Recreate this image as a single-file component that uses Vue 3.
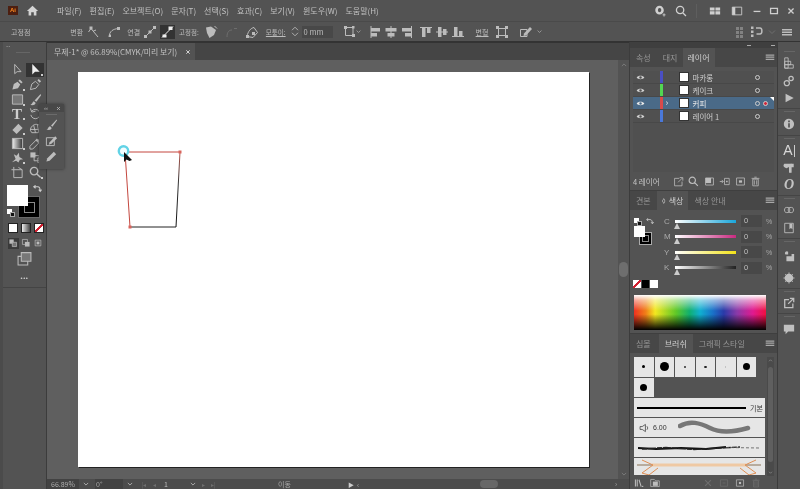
<template>
  <div class="app">
    <!-- 메뉴 바 -->
    <header class="menubar">
      <div class="logo">Ai</div>
      <Ic n="home" class="home" />
      <nav class="menus">
        <span v-for="m in menus" :key="m">{{ m }}</span>
      </nav>
      <div class="win">
        <Ic n="user" class="w-ic" />
        <Ic n="search" class="w-ic search" />
        <i class="win-sep"></i>
        <Ic n="layout" class="w-ic" />
        <Ic n="panel" class="w-ic panel-ic" />
        <Ic n="min" class="w-ic min" />
        <Ic n="max" class="w-ic" />
        <Ic n="close" class="w-ic last" />
      </div>
    </header>

    <!-- 옵션 바 -->
    <section class="optbar">
      <span class="lbl first">고정점</span>
      <span class="lbl conv">변환</span>
      <div class="grp g-conv"><Ic n="convA" class="o-ic" /><Ic n="convB" class="o-ic" /></div>
      <span class="lbl link">연결</span>
      <div class="grp g-link"><Ic n="joinA" class="o-ic" /><Ic n="joinB" class="o-ic on" /></div>
      <span class="lbl anch">고정점:</span>
      <div class="grp g-anch"><Ic n="anchA" class="o-ic" /><Ic n="anchB" class="o-ic off" /><Ic n="anchC" class="o-ic" /></div>
      <span class="lbl corner">모퉁이:</span>
      <div class="spin"><Ic n="spin" class="spin-ic" /></div>
      <div class="mm">0 mm</div>
      <Ic n="shapeBox" class="o-ic box" />
      <Ic n="chev" class="chev chev-box" />
      <div class="grp g-align">
        <Ic v-for="a in aligns" :key="a" :n="a" class="o-ic" />
      </div>
      <span class="lbl trans">변형</span>
      <Ic n="cornerBox" class="o-ic tbox" />
      <Ic n="pencilBox" class="o-ic pbox" />
      <Ic n="chev" class="chev chev-p" />
      <div class="grp g-right">
        <Ic n="dotsGrid" class="o-ic dim" />
        <Ic n="isolate" class="o-ic" />
        <Ic n="chev" class="o-ic off" />
        <Ic n="burger" class="o-ic" />
      </div>
    </section>

    <div class="main">
      <!-- 왼쪽 도구 패널 -->
      <aside class="tools">
        <div class="tools-head"><span>‥</span><i></i></div>
        <div class="tool-grid">
          <div v-for="t in tools" :key="t.n" class="tool" :class="{ active: t.active }">
            <span v-if="t.n === 'type'" class="type-t">T</span>
            <Ic v-else :n="t.n" class="t-ic" />
            <i v-if="t.more" class="more"></i>
          </div>
        </div>
        <div class="colors">
          <div class="stroke-sw"><i></i></div>
          <div class="fill-sw"></div>
          <Ic n="swap" class="swap" />
          <div class="defaults"><i class="d1"></i><i class="d2"></i></div>
        </div>
        <div class="modes">
          <span class="mode"><i class="m-white"></i></span>
          <span class="mode"><i class="m-grad"></i></span>
          <span class="mode"><i class="m-none"></i></span>
        </div>
        <div class="draws">
          <span class="draw on"><Ic n="drawA" class="t-ic small" /></span>
          <span class="draw"><Ic n="drawB" class="t-ic small" /></span>
          <span class="draw"><Ic n="drawC" class="t-ic small" /></span>
        </div>
        <Ic n="screen" class="screen" />
        <div class="dots">•••</div>
      </aside>

      <!-- 펜/연필 플라이아웃 -->
      <div class="flyout">
        <div class="fly-head"><span>‹‹</span><Ic n="close" class="fly-x" /></div>
        <i class="fly-grip"></i>
        <Ic n="brush" class="fly-ic" />
        <Ic n="blob" class="fly-ic" />
        <Ic n="pencil" class="fly-ic" />
      </div>

      <!-- 문서 영역 -->
      <section class="doc">
        <div class="tabs">
          <div class="tab">
            <span>무제-1* @ 66.89%(CMYK/미리 보기)</span>
            <Ic n="close" class="tab-x" />
          </div>
        </div>
        <div class="canvas-row">
          <div class="canvas">
            <div class="artboard">
              <svg class="shape" width="120" height="100" viewBox="0 0 120 100">
                <defs>
                  <linearGradient id="rightEdge" x1="0" y1="0" x2="0" y2="1">
                    <stop offset="0" stop-color="#b5564c" />
                    <stop offset="0.4" stop-color="#333" />
                    <stop offset="1" stop-color="#111" />
                  </linearGradient>
                </defs>
                <path d="M52 80H98" stroke="#222" fill="none" />
                <path d="M102 5L98 80" stroke="url(#rightEdge)" fill="none" />
                <path d="M47 5H102M47 5L52 80" stroke="#c4473f" fill="none" />
                <rect x="100.500" y="3.500" width="3" height="3" fill="#d9645c" />
                <rect x="50.500" y="78.500" width="3" height="3" fill="#d9645c" />
                <circle cx="45.500" cy="4" r="4.700" stroke="#62d3e6" stroke-width="2.400" fill="#f4fdff" />
                <path d="M46 5V15L48.500 12.500L51.500 14L54 13Z" fill="#111" />
              </svg>
            </div>
          </div>
          <div class="vscroll">
            <Ic n="chevUp" class="sc-ic" />
            <i class="vthumb"></i>
            <Ic n="chev" class="sc-ic" />
          </div>
        </div>
        <footer class="status">
          <span class="field zoom">66.89%</span>
          <Ic n="chev" class="st-ic" />
          <span class="field deg">0°</span>
          <Ic n="chev" class="st-ic" />
          <span class="nav first-nav">|◂</span><span class="nav">◂</span>
          <span class="page">1</span>
          <Ic n="chev" class="st-ic" />
          <span class="nav">▸</span><span class="nav">▸|</span>
          <span class="move">이동</span>
          <span class="play">▶</span>
          <div class="hscroll">
            <span class="sc-l">‹</span>
            <i class="hthumb"></i>
            <span class="sc-r">›</span>
          </div>
        </footer>
      </section>

      <!-- 오른쪽 패널 -->
      <aside class="panels">
        <div class="strip"><i></i><i></i></div>

        <section class="panel layers">
          <div class="ptabs">
            <span class="pt t1">속성</span>
            <span class="pt t2">대지</span>
            <span class="pt active t3">레이어</span>
            <Ic n="burger" class="pmenu" />
          </div>
          <div class="layer-list">
            <div v-for="l in layers" :key="l.name" class="layer" :class="{ sel: l.sel }">
              <Ic n="eye" class="eye" />
              <i class="lcolor" :style="{ background: l.color }"></i>
              <span class="larrow">{{ l.sel ? '›' : '' }}</span>
              <i class="thumb"></i>
              <span class="lname">{{ l.name }}</span>
              <i class="target"></i>
              <i v-if="l.sel" class="lsel"></i>
              <i v-if="l.sel" class="lcorner"></i>
            </div>
          </div>
          <div class="lfoot">
            <span>4 레이어</span>
            <div class="lfoot-ic">
              <Ic v-for="f in layerFoot" :key="f" :n="f" class="f-ic" />
            </div>
          </div>
        </section>

        <section class="panel colorp">
          <div class="ptabs">
            <span class="pt c1">견본</span>
            <span class="pt active c2"><em>◊</em> 색상</span>
            <span class="pt c3">색상 안내</span>
            <Ic n="burger" class="pmenu" />
          </div>
          <div class="cbody">
            <div class="cswatch">
              <div class="defaults dsm"><i class="d1"></i><i class="d2"></i></div>
              <Ic n="swap" class="swap2" />
              <div class="stroke2"><i></i></div>
              <div class="fill2"></div>
            </div>
            <div class="sliders">
              <div v-for="s in sliders" :key="s.k" class="slider">
                <label>{{ s.k }}</label>
                <div class="track" :style="{ background: s.bg }"><i class="knob"></i></div>
                <span class="val">0</span>
                <span class="pct">%</span>
              </div>
            </div>
          </div>
          <div class="quick">
            <i class="q-none"></i><i class="q-black"></i><i class="q-white"></i>
          </div>
          <div class="spectrum"></div>
        </section>

        <section class="panel brushes">
          <div class="ptabs">
            <span class="pt b1">심볼</span>
            <span class="pt active b2">브러쉬</span>
            <span class="pt b3">그래픽 스타일</span>
            <Ic n="burger" class="pmenu" />
          </div>
          <div class="bbody">
            <div class="blist">
              <div class="bgrid">
                <div v-for="(b, i) in dots" :key="i" class="bcell"><i :style="{ width: b.w + 'px', height: b.h + 'px', opacity: b.o }"></i></div>
              </div>
              <div class="brow basic"><i></i><span>기본</span></div>
              <div class="brow size">
                <Ic n="speaker" class="spk" />
                <span>6.00</span>
                <svg width="74" height="16" viewBox="0 0 74 16">
                  <path d="M2 6C12 0 22 3 32 8C42 13 56 12 70 8" stroke="#777" stroke-width="4.500" stroke-linecap="round" fill="none" />
                </svg>
              </div>
              <div class="brow ink">
                <svg width="126" height="14" viewBox="0 0 126 14">
                  <path d="M2 7L20 8L45 7L70 8L90 6" stroke="#111" stroke-width="2.200" fill="none" />
                  <path d="M6 8L30 6.500L58 8.500L84 7L104 6" stroke="#222" stroke-width="1.400" stroke-dasharray="5 1 8 1" fill="none" />
                  <path d="M90 6.500L124 7" stroke="#555" stroke-width="0.800" stroke-dasharray="3 2" fill="none" />
                </svg>
              </div>
              <div class="brow arrow">
                <svg width="130" height="18" viewBox="0 0 130 18">
                  <path d="M3 7H127" stroke="#8a7256" fill="none" />
                  <path d="M18 5.500H112V8.500H18Z" fill="#efc9a4" />
                  <path d="M8 2L19 7L8 15L15 17L24 10M122 2L111 7L122 15L115 17L106 10" stroke="#df8f55" fill="none" />
                </svg>
              </div>
            </div>
            <div class="bscroll">
              <Ic n="chevUp" class="sc-ic" />
              <i></i>
              <Ic n="chev" class="sc-ic" />
            </div>
          </div>
          <div class="bfoot">
            <Ic n="library" class="bf" />
            <Ic n="cloudLib" class="bf lib" />
            <div class="bfoot-r">
              <Ic n="xmark" class="bf off" />
              <Ic n="optBox" class="bf off" />
              <Ic n="newBox" class="bf" />
              <Ic n="trash" class="bf off" />
            </div>
          </div>
        </section>
      </aside>

      <!-- 오른쪽 도크 -->
      <aside class="dock">
        <div v-for="(g, i) in dock" :key="i" class="dock-group">
          <i class="dock-grip"></i>
          <template v-for="d in g" :key="d">
            <span v-if="d === 'A'" class="d-a">A<b></b></span>
            <span v-else-if="d === 'O'" class="d-o">O</span>
            <Ic v-else :n="d" class="d-ic" />
          </template>
        </div>
      </aside>
    </div>
  </div>
</template>

<script setup>
import { h } from 'vue'

// 아이콘: [path, 's'(선) | 'f'(면) | 'b'(둘 다)]
const icons = {
  home: [['M1 7.500L7 2L13 7.500H11.200V12.500H8.400V9H5.600V12.500H2.800V7.500Z', 'f']],
  user: [['M6.500 1A5 5 0 1 1 6.400 11A5 5 0 0 1 6.500 1ZM6.500 3.500A2 2.500 0 1 0 6.600 8.500A2 2.500 0 0 0 6.500 3.500Z', 'f'], ['M10 11.500H13.500M11.700 9.700V13.500', 's']],
  search: [['M6 1.500A4.300 4.300 0 1 1 5.900 10.100A4.300 4.300 0 0 1 6 1.500ZM9 9L12.800 12.800', 's2']],
  layout: [['M1 3H6.500V6.300H1ZM7.500 3H13V6.300H7.500ZM1 7.300H6.500V11H1ZM7.500 7.300H13V11H7.500Z', 'f']],
  panel: [['M1.500 2.500H12.500V11.500H1.500Z', 's'], ['M1.500 2.500H5V11.500H1.500Z', 'f']],
  min: [['M3 7.500H11', 's2']],
  max: [['M3 4H11V10H3Z', 's2']],
  close: [['M4 4L10 10M10 4L4 10', 's2']],
  convA: [['M4 3.500L11 12M4 3.500L1.500 7M6.200 6.200L9 5', 's'], ['M2.500 1.500H5.500V4.500H2.500Z', 'f']],
  convB: [['M2 12C2.500 6 6 4 11.500 3.500', 's'], ['M10 2H13V5H10Z', 'f'], ['M2 9.500H4V12H2Z', 'f']],
  joinA: [['M2 12L12 2', 's'], ['M1 10H4V13H1ZM5.500 5.500H8.500V8.500H5.500ZM10 1H13V4H10Z', 'f']],
  joinB: [['M1.500 12.500L12.500 1.500', 's'], ['M2 9.500H6V12.500H2ZM8 1.500H12V5H8Z', 'f']],
  anchA: [['M2 2.500L7 1.500L12 5L10 10L5.500 13L3 8Z', 'f'], ['M10.500 1L13 3.500', 's']],
  anchB: [['M3 12C3 7 5 5 8 5M10 3.500H13', 's']],
  anchC: [['M2 11.500C3 6 6 3 9 2.500L12.500 7.500L8 12.500Z', 's'], ['M1 10H4V13H1ZM7 7H10V10H7Z', 'f']],
  spin: [['M3.500 5.500L7 2L10.500 5.500M3.500 8.500L7 12L10.500 8.500', 's']],
  shapeBox: [['M2.500 2.500H10V10.500H2.500Z', 's'], ['M1 1H4V4H1ZM9 9H12V12H9ZM9 1H11.500V3.500H9Z', 'f']],
  chev: [['M4 5.500L7 8.500L10 5.500', 's']],
  chevUp: [['M4 8.500L7 5.500L10 8.500', 's']],
  alL: [['M3 1V13', 's'], ['M3 3H12V6.500H3ZM3 8H9V11.500H3Z', 'f']],
  alC: [['M7 1V13', 's'], ['M1.500 3H12.500V6.500H1.500ZM3.500 8H10.500V11.500H3.500Z', 'f']],
  alR: [['M11.500 1V13', 's'], ['M2 3H11.500V6.500H2ZM5 8H11.500V11.500H5Z', 'f']],
  alT: [['M1 2.500H13', 's'], ['M3 2.500H6.500V12H3ZM8 2.500H11.500V8H8Z', 'f']],
  alM: [['M1 7H13', 's'], ['M3 2H6.500V12H3ZM8 4H11.500V10H8Z', 'f']],
  alB: [['M1 11.500H13', 's'], ['M3 2H6.500V11.500H3ZM8 6H11.500V11.500H8Z', 'f']],
  cornerBox: [['M3.500 3.500H10.500V10.500H3.500Z', 's'], ['M1 1H4V4H1ZM10 1H13V4H10ZM1 10H4V13H1ZM10 10H13V13H10Z', 'f']],
  pencilBox: [['M1.500 4.500H8V11.500H1.500Z', 's'], ['M5 8.500L11 2L13 4L7 10.500L4.500 11Z', 'f']],
  dotsGrid: [['M2 2H5V5H2ZM6 2H9V5H6ZM2 6H5V9H2ZM6 6H9V9H6ZM2 10H5V13H2ZM6 10H9V13H6Z', 'f']],
  isolate: [['M2 1.500H4.500V4H2ZM2 5.500H4.500V8H2ZM2 9.500H4.500V12H2Z', 'f'], ['M7 3H11C13.500 3 13.500 9 11 9H7.500', 's2']],
  burger: [['M2 4H12V5.500H2ZM2 6.500H12V8H2ZM2 9H12V10.500H2Z', 'f']],
  arrowLine: [['M4 1.500V11.500L6.600 9.300H10.800Z', 's']],
  arrowFill: [['M3.500 1V12.500L6.500 9.500H11.500Z', 'f']],
  pen: [['M1.500 12.500L3 6.500L7 4L10 7L7.500 11ZM8 3L9.500 1.500L12.500 4.500L11 6Z', 'f']],
  curv: [['M1.500 12.500L3 6.500L7 3.500L10.500 7L7.500 11Z', 's'], ['M9 2.500L10.500 1L13 3.500L11.500 5Z', 'f']],
  rect: [['M1.500 2H12.500V12H1.500Z', 'b']],
  paint: [['M12.500 1L6 8L8 9.500L13 2.500Z', 'f'], ['M5.200 9C3.500 9.500 3.800 12 1.500 13C5 13.500 7.500 12.500 7 10.500Z', 'f']],
  rotate: [['M3 4.500A5 5 0 1 1 2 8.500', 's'], ['M1.500 1.500L3 5.500L7 4.500', 's']],
  eraser: [['M1.500 8.500L8 2L12.500 6.500L6 13Z', 'f']],
  builder: [['M1.500 9C1.500 5 5 2.500 8 2.500C11 2.500 13 5 13 8L10 11.500L3 11.500Z', 's'], ['M5 3.500L7 11.500M1.500 8H13M9 2.500L10.500 11', 's']],
  gradient: [['M1.500 1.500H12.500V12.500H1.500Z', 'g']],
  dropper: [['M8 3L11 6L4 13H1V10Z', 's'], ['M8.500 1.500L10 3L11 2L13 4L12 5L13 6.500L11 7.500L7 3.500Z', 'f']],
  puppet: [['M1 12L5 8.500L3 3.500L6 5L8.500 2L9 6.500L13 9L9.500 9.500L8 12.500L5.500 10.500Z', 'f']],
  symbol: [['M1.500 1.500H7V7H1.500Z', 'f'], ['M5.500 5H11V10.500H5.500ZM9.500 7.500H13V12.500H9.500Z', 's']],
  artboard: [['M3 4H12V12.500H3Z', 's'], ['M3 1V4H0.500M8 1.500L12 4', 's']],
  zoom: [['M5.500 1.500A4 4 0 1 1 5.400 9.500A4 4 0 0 1 5.500 1.500ZM8.500 8.500L12.500 12.500', 's2']],
  swap: [['M3 2.500H8C10.500 2.500 11.500 5 11.500 8.500M9.500 6.500L11.500 9L13.500 6.500M5 0.500L2.500 2.500L5 4.500', 's2']],
  drawA: [['M2 2H8V8H2Z', 'f'], ['M6 6H12V12H6Z', 'b']],
  drawB: [['M2 2H9V9H2Z', 's'], ['M5.500 5.500H12V12H5.500Z', 'f']],
  drawC: [['M3 3H11V11H3Z', 's'], ['M5 5H9V9H5Z', 'f']],
  screen: [['M1 5H10V13H1Z', 's'], ['M4 1.500H13V9.500H4Z', 'b']],
  brush: [['M12.500 1.500L6.500 8L8 9.500L13 2.500Z', 'f'], ['M5.500 9C3 9.500 4 12 1.500 12.500C5 13.500 7.500 12.500 7 10.500Z', 'f']],
  blob: [['M1.500 4H10V12.500H1.500Z', 's'], ['M5 9L11 2.500L13 4.500L7 10.500L4 11.500Z', 'f']],
  pencil: [['M1.500 12.500L2.500 9L9.500 2L12 4.500L5 11.500Z', 'f']],
  eye: [['M1 7C3 3.500 11 3.500 13 7C11 10.500 3 10.500 1 7ZM7 5A2 2 0 1 0 7.100 9A2 2 0 0 0 7 5Z', 'f']],
  exportL: [['M8 3H2V12.500H11.500V7M6.500 8L12 2.500M8.500 2H12.500V6', 's']],
  searchS: [['M5.500 1.500A4 4 0 1 1 5.400 9.500A4 4 0 0 1 5.500 1.500ZM8.500 8.500L12.500 12.500', 's2']],
  mask: [['M2 2.500H12V11.500H2Z', 's'], ['M2 2.500H9V9H2Z', 'f']],
  subLayer: [['M1 7H5M3.500 5L5.500 7L3.500 9', 's'], ['M7 3H13V11H7Z', 's'], ['M9 6H11V8H9Z', 'f']],
  newLayer: [['M2 2.500H12V11.500H2Z', 's'], ['M5 5.500H9V8.500H5Z', 'f']],
  trash: [['M3.500 4H10.500V12.500H3.500ZM2 3H12M5.500 1.500H8.500', 's'], ['M5.500 5.500V11M8.500 5.500V11', 's']],
  speaker: [['M1.500 5H4.500L9 2V12L4.500 9H1.500Z', 's'], ['M11 4.500C12.500 6 12.500 8 11 9.500', 's']],
  library: [['M2 2V12M4.500 2V12M7 2.500L10 12', 's2'], ['M11 11H13V12.500H11Z', 'f']],
  cloudLib: [['M1 2H6L8 4H13V12H1Z', 's'], ['M4 5H11V11H4Z', 'f']],
  xmark: [['M3 3L11 11M11 3L3 11', 's2']],
  optBox: [['M2 2.500H12V11.500H2Z', 's'], ['M5 7H9', 's']],
  newBox: [['M2 2.500H12V11.500H2Z', 's'], ['M5.500 5.500H8.500V8.500H5.500Z', 'f']],
  grid: [['M2 1H6V13H2ZM2 9H12V13H2ZM2 5H9V9H2Z', 's']],
  gears: [['M9.500 1.500A2.500 2.500 0 1 1 9.400 6.500A2.500 2.500 0 0 1 9.500 1.500ZM4.500 6.500A3 3 0 1 1 4.400 12.500A3 3 0 0 1 4.500 6.500Z', 's2']],
  play: [['M3 2L12.500 7L3 12Z', 'f']],
  info: [['M7 1A6 6 0 1 1 6.900 13A6 6 0 0 1 7 1ZM6 3V5H8V3ZM6 6V11H8V6Z', 'f']],
  para: [['M1.500 2H12.500V6H9.500V12.500H7V6H6A2 2 0 0 1 1.500 2Z', 'f'], ['M9.500 2V12.500', 's']],
  linkI: [['M4 4H6C8.500 4 8.500 10 6 10H4C1 10 1 4 4 4ZM8 4H10C13 4 13 10 10 10H8C5.500 10 5.500 4 8 4Z', 's']],
  book: [['M2 1.500H12V12.500H2Z', 's'], ['M7.500 2H11V8.500L9.200 7L7.500 8.500Z', 'f']],
  recolor: [['M6 1V4H3A2 2 0 0 1 6 1Z', 'f'], ['M4 6H10V3.500H13V12H4Z', 'f']],
  sunI: [['M7 2A5 5 0 1 1 6.900 12A5 5 0 0 1 7 2Z', 'f'], ['M7 0.500V13.500M0.500 7H13.500M2.500 2.500L11.500 11.500M11.500 2.500L2.500 11.500', 's']],
  exportB: [['M7 3H2V12.500H11.500V7.500', 's2'], ['M6 8L12 2M8 1.500H12.500V6', 's2']],
  comment: [['M1 2H13V10H6L3 13V10H1Z', 'f']]
}

const Ic = (props) => h('svg', { viewBox: '0 0 14 14', class: 'ic' },
  (icons[props.n] || []).map(([d, m]) => {
    if (m === 'f') return h('path', { d, fill: 'currentColor' })
    if (m === 's') return h('path', { d, fill: 'none', stroke: 'currentColor', 'stroke-width': 1 })
    if (m === 's2') return h('path', { d, fill: 'none', stroke: 'currentColor', 'stroke-width': 1.5 })
    if (m === 'g') return h('path', { d, fill: 'url(#toolGrad)', stroke: 'currentColor', 'stroke-width': 1 })
    return h('path', { d, fill: '#777', stroke: 'currentColor', 'stroke-width': 1 })
  }).concat(props.n === 'gradient'
    ? [h('linearGradient', { id: 'toolGrad' }, [h('stop', { offset: 0, 'stop-color': '#eee' }), h('stop', { offset: 1, 'stop-color': '#333' })])]
    : []))
Ic.props = ['n']

const menus = ['파일(F)', '편집(E)', '오브젝트(O)', '문자(T)', '선택(S)', '효과(C)', '보기(V)', '윈도우(W)', '도움말(H)']
const aligns = ['alL', 'alC', 'alR', 'alT', 'alM', 'alB']

const tools = [
  { n: 'arrowLine' }, { n: 'arrowFill', active: true, more: true },
  { n: 'pen', more: true }, { n: 'curv' },
  { n: 'rect', more: true }, { n: 'paint', more: true },
  { n: 'type', more: true }, { n: 'rotate', more: true },
  { n: 'eraser', more: true }, { n: 'builder', more: true },
  { n: 'gradient', more: true }, { n: 'dropper', more: true },
  { n: 'puppet', more: true }, { n: 'symbol', more: true },
  { n: 'artboard' }, { n: 'zoom', more: true }
]

const layers = [
  { name: '마카롱', color: '#4a4fc4' },
  { name: '케이크', color: '#52d652' },
  { name: '커피', color: '#d94a4a', sel: true },
  { name: '레이어 1', color: '#4a78d9' }
]
const layerFoot = ['exportL', 'searchS', 'mask', 'subLayer', 'newLayer', 'trash']

const sliders = [
  { k: 'C', bg: 'linear-gradient(to right, #fff, #1aa6da)' },
  { k: 'M', bg: 'linear-gradient(to right, #fff, #c92a80)' },
  { k: 'Y', bg: 'linear-gradient(to right, #fff, #f2e21a)' },
  { k: 'K', bg: 'linear-gradient(to right, #fff, #222)' }
]

const dots = [
  { w: 3, h: 3, o: 1 }, { w: 9, h: 9, o: 1 }, { w: 2, h: 2, o: 0.8 }, { w: 3, h: 2, o: 0.9 },
  { w: 1, h: 2, o: 0.2 }, { w: 7, h: 7, o: 1 }, { w: 7, h: 7, o: 1 }
]

const dock = [
  ['grid', 'gears', 'play'],
  ['info'],
  ['A', 'para', 'O'],
  ['linkI', 'book'],
  ['recolor', 'sunI'],
  ['exportB'],
  ['comment']
]
</script>

<style>
html, body {
  margin: 0;
  background: #535353;
}
</style>

<style scoped>
.app {
  width: 800px;
  height: 489px;
  overflow: hidden;
  display: flex;
  flex-direction: column;
  background: #535353;
  color: #c0c0c0;
  font-family: "Noto Sans CJK KR", "Noto Sans", sans-serif;
  font-size: 8px;
  filter: blur(0.3px);
}

.ic {
  display: block;
  width: 14px;
  height: 14px;
  flex: none;
}

i { display: block; font-style: normal; }

/* 메뉴 바 */
.menubar {
  height: 21px;
  flex: none;
  display: flex;
  align-items: center;
}
.logo {
  width: 10px;
  height: 9px;
  margin-left: 8px;
  background: #4d1f10;
  color: #ff8a1e;
  font: 700 6px/9px "Liberation Sans", sans-serif;
  text-align: center;
}
.home { margin-left: 8px; width: 13px; height: 13px; color: #d4d4d4; }
.menus {
  display: flex;
  gap: 8px;
  margin-left: 18px;
  white-space: nowrap;
}
.win {
  margin-left: auto;
  display: flex;
  align-items: center;
  color: #cfcfcf;
}
.w-ic { width: 12px; height: 12px; margin-right: 5px; }
.last { margin-right: 3px; }
.search { margin-left: 4px; }
.win-sep { width: 1px; height: 14px; background: #5e5e5e; margin: 0 12px 0 4px; }
.panel-ic { margin-left: 5px; }
.min { margin-left: 3px; }

/* 옵션 바 */
.optbar {
  height: 21px;
  flex: none;
  display: flex;
  align-items: center;
  border-top: 1px solid #4a4a4a;
  border-bottom: 1px solid #333;
  box-sizing: border-box;
  color: #bcbcbc;
}
.grp { display: flex; align-items: center; }
.lbl { white-space: nowrap; font-size: 7px; }
.first { margin-left: 11px; }
.conv { margin-left: 40px; }
.g-conv { margin-left: 4px; gap: 6px; }
.link { margin-left: 6px; }
.g-link { margin-left: 3px; gap: 3px; }
.anch { margin-left: 4px; font-size: 6.500px; }
.g-anch { margin-left: 5px; gap: 6.500px; }
.corner { margin-left: 7px; font-size: 6.500px; text-decoration: underline; }
.o-ic { width: 14px; height: 14px; }
.on { background: #333; color: #eee; padding: 0; width: 15px; height: 14px; }
.off { opacity: 0.25; }
.dim { opacity: 0.45; }
.spin { margin-left: 3px; width: 10px; }
.spin-ic { width: 12px; height: 13px; }
.mm {
  margin-left: 3px;
  width: 31px;
  height: 12px;
  background: #484848;
  padding-left: 2px;
  box-sizing: border-box;
  line-height: 12px;
  font-size: 7.500px;
}
.box { margin-left: 10px; }
.chev { width: 9px; height: 9px; }
.chev-box { margin-left: -3px; }
.chev-p { margin-left: 2px; }
.g-align { margin-left: 5px; gap: 2px; }
.g-align > :nth-child(4) { margin-left: 3px; }
.trans { margin-left: 11px; text-decoration: underline; }
.tbox { margin-left: 6px; }
.pbox { margin-left: 10px; }
.g-right { margin-left: auto; gap: 1.500px; margin-right: 6px; }

.main {
  flex: 1;
  min-height: 0;
  display: flex;
  position: relative;
}

/* 도구 패널 */
.tools {
  width: 47px;
  flex: none;
  box-sizing: border-box;
  border-left: 3px solid #4b4b4b;
  border-right: 1px solid #3c3c3c;
  display: flex;
  flex-direction: column;
  align-items: center;
  background: #535353;
  position: relative;
}
.tools::after {
  content: "";
  position: absolute;
  left: 0;
  right: 0;
  top: 245px;
  height: 1px;
  background: #444;
}
.tools-head {
  height: 20.500px;
  width: 100%;
  flex: none;
  position: relative;
}
.tools-head span {
  position: absolute;
  left: 3px;
  top: -1px;
  font: 8px/8px "Liberation Sans", sans-serif;
  color: #aaa;
}
.tools-head i {
  position: absolute;
  left: 13px;
  top: 10px;
  width: 14px;
  height: 1px;
  background: #666;
}
.tool-grid {
  display: grid;
  grid-template-columns: 18px 18px;
  grid-auto-rows: 14.700px;
  width: 36px;
  margin-left: 3px;
}
.tool {
  position: relative;
  display: flex;
  align-items: center;
  justify-content: center;
  color: #bdbdbd;
}
.tool.active { background: #333; color: #eee; }
.t-ic { width: 13px; height: 13px; }
.more {
  position: absolute;
  right: 1px;
  bottom: 1px;
  width: 2px;
  height: 2px;
  background: #ccc;
}
.type-t {
  font: 700 15px/14px "Liberation Serif", serif;
  color: #cfcfcf;
}
.colors {
  position: relative;
  width: 36px;
  height: 36px;
  margin-top: 5px;
  flex: none;
}
.fill-sw {
  position: absolute;
  left: 0;
  top: 0;
  width: 21px;
  height: 21px;
  background: #fff;
}
.stroke-sw {
  position: absolute;
  left: 12px;
  top: 12px;
  width: 20px;
  height: 20px;
  background: #000;
  outline: 1px solid #6a6a6a;
}
.stroke-sw i {
  position: absolute;
  left: 5px;
  top: 5px;
  width: 9px;
  height: 9px;
  border: 1px solid #888;
}
.swap { position: absolute; left: 25px; top: 0; width: 10px; height: 10px; color: #ccc; }
.defaults { position: absolute; left: 0; top: 24px; width: 9px; height: 9px; }
.defaults .d1 { position: absolute; left: 0; top: 0; width: 5px; height: 5px; background: #fff; }
.defaults .d2 { position: absolute; left: 3px; top: 3px; width: 5px; height: 5px; background: #111; border: 1px solid #aaa; box-sizing: border-box; }
.modes, .draws {
  display: flex;
  width: 36px;
  justify-content: space-between;
  margin-left: 2px;
  flex: none;
}
.modes { margin-top: 2px; }
.draws { margin-top: 4.500px; }
.mode {
  width: 10px;
  height: 10px;
  background: #222;
  padding: 1px;
  box-sizing: border-box;
}
.mode i { width: 100%; height: 100%; }
.m-white { background: #fff; }
.m-grad { background: linear-gradient(to right, #eee, #444); }
.m-none { background: linear-gradient(135deg, #fff 42%, #d02030 42%, #d02030 58%, #fff 58%); }
.draw { width: 11px; height: 11px; display: flex; align-items: center; justify-content: center; color: #bbb; }
.draw.on { background: #3a3a3a; }
.small { width: 10px; height: 10px; }
.screen { margin-top: 2px; width: 15px; height: 15px; color: #bbb; }
.dots { margin-top: 8.500px; font: 6px/8px "Liberation Sans", sans-serif; letter-spacing: 0.500px; color: #ccc; }

/* 플라이아웃 */
.flyout {
  position: absolute;
  left: 39px;
  top: 62px;
  width: 25px;
  height: 65px;
  background: #535353;
  box-shadow: 0 0 3px #333;
  display: flex;
  flex-direction: column;
  align-items: center;
  color: #bdbdbd;
  z-index: 2;
}
.fly-head {
  width: 100%;
  height: 8px;
  background: #484848;
  display: flex;
  justify-content: space-between;
  align-items: center;
  padding: 0 2px 0 5px;
  box-sizing: border-box;
  font: 6px/8px "Liberation Sans", sans-serif;
}
.fly-x { width: 7px; height: 7px; }
.fly-grip { width: 11px; height: 1px; background: #6b6b6b; margin: 2px 0 3px; }
.fly-ic { width: 13px; height: 13px; margin-bottom: 3px; }

/* 문서 */
.doc {
  flex: 1;
  min-width: 0;
  display: flex;
  flex-direction: column;
  border-right: 1px solid #3c3c3c;
}
.tabs {
  height: 18px;
  flex: none;
  background: #454545;
  border-top: 1px solid #333;
  box-sizing: border-box;
}
.tab {
  width: 148px;
  height: 17px;
  background: #535353;
  display: flex;
  align-items: center;
  padding-left: 7px;
  box-sizing: border-box;
  white-space: nowrap;
  font-size: 7.900px;
}
.tab-x { margin-left: auto; margin-right: 3px; width: 8px; height: 8px; color: #e8e8e8; }
.canvas-row { flex: 1; min-height: 0; display: flex; }
.canvas {
  flex: 1;
  min-width: 0;
  background: #5f5f5f;
  padding: 12px 0 0 31px;
  box-sizing: border-box;
  overflow: hidden;
}
.artboard {
  width: 511px;
  height: 395px;
  background: #fff;
  box-shadow: 1px 1px 0 #222;
  position: relative;
}
.shape { position: absolute; left: 0; top: 75px; overflow: visible; }
.vscroll {
  width: 11px;
  flex: none;
  background: #535353;
  display: flex;
  flex-direction: column;
  align-items: center;
  justify-content: space-between;
  color: #888;
  position: relative;
}
.vthumb {
  position: absolute;
  left: 1px;
  top: 202px;
  width: 9px;
  height: 15px;
  background: #6e6e6e;
  border-radius: 5px;
}
.sc-ic { width: 10px; height: 10px; }
.status {
  height: 10px;
  flex: none;
  display: flex;
  align-items: center;
  background: #4c4c4c;
  font-size: 7px;
  color: #aaa;
  white-space: nowrap;
}
.field { background: #424242; height: 10px; line-height: 10px; padding-left: 4px; box-sizing: border-box; }
.zoom { width: 32px; }
.deg { width: 28px; margin-left: 4px; padding-left: 1px; }
.st-ic { width: 10px; height: 10px; margin-left: 2px; color: #ccc; }
.nav { width: 10px; color: #6e6e6e; font-size: 6px; text-align: center; }
.first-nav { margin-left: 4px; }
.page { margin-left: 5px; width: 22px; color: #bbb; }
.move { margin-left: 60px; width: 70px; text-align: left; }
.play { font-size: 6px; color: #ccc; }
.hscroll {
  flex: 1;
  display: flex;
  align-items: center;
  margin-left: 3px;
  position: relative;
  height: 100%;
}
.sc-l { color: #aaa; }
.sc-r { position: absolute; right: 12px; top: -1px; color: #aaa; }
.hthumb {
  position: absolute;
  left: 123px;
  top: 1px;
  width: 18px;
  height: 8px;
  background: #676767;
  border-radius: 4px;
}

/* 오른쪽 패널 */
.panels {
  width: 148px;
  flex: none;
  display: flex;
  flex-direction: column;
  background: #3f3f3f;
  border-right: 1px solid #3c3c3c;
  box-sizing: border-box;
}
.strip {
  height: 6px;
  flex: none;
  background: #3f3f3f;
  display: flex;
  justify-content: flex-end;
  align-items: center;
  gap: 20px;
  padding-right: 2px;
}
.strip i { width: 4px; height: 1px; background: #aaa; }
.panel { background: #535353; display: flex; flex-direction: column; }
.ptabs {
  height: 19px;
  flex: none;
  background: #474747;
  display: flex;
  align-items: stretch;
  position: relative;
  color: #969696;
  white-space: nowrap;
}
.pt { display: flex; align-items: center; padding: 0 6px; }
.pt.active { background: #535353; color: #d0d0d0; }
.pt.t1 { margin-left: 0; }
.pt em { font-style: normal; font-size: 6px; margin-right: 2px; }
.pmenu { position: absolute; right: 1px; top: 3px; width: 12px; height: 12px; color: #a8a8a8; }
.t3 { margin-left: 0; width: 32px; box-sizing: border-box; padding: 0 4px; }
.layers { height: 142px; flex: none; margin-bottom: 1px; }
.layer-list {
  flex: 1;
  margin: 4px 3px 0;
  background: #505050;
}
.layer {
  height: 13px;
  display: flex;
  align-items: center;
  position: relative;
  font-size: 7.500px;
  color: #d0d0d0;
  border-bottom: 1px solid #484848;
  box-sizing: border-box;
}
.layer.sel { background: #4a6a88; color: #eaeaea; }
.eye { width: 9px; height: 9px; margin-left: 3px; flex: none; }
.lcolor { width: 3px; height: 12px; margin-left: 14.500px; flex: none; }
.larrow { width: 16px; padding-left: 3px; box-sizing: border-box; flex: none; font-size: 9px; line-height: 10px; }
.thumb { width: 10px; height: 10px; background: #fff; border: 1px solid #333; box-sizing: border-box; flex: none; }
.lname { margin-left: 4px; }
.target {
  position: absolute;
  left: 122px;
  top: 4px;
  width: 5px;
  height: 5px;
  border: 1px solid #ccc;
  border-radius: 50%;
  box-sizing: border-box;
}
.lsel {
  position: absolute;
  left: 130px;
  top: 4px;
  width: 5px;
  height: 5px;
  background: #d0283c;
  border: 1px solid #ccc;
  border-radius: 50%;
  box-sizing: border-box;
}
.lcorner {
  position: absolute;
  right: 0;
  top: 0;
  border-top: 4px solid #fff;
  border-left: 4px solid transparent;
}
.lfoot {
  height: 18px;
  flex: none;
  display: flex;
  align-items: center;
  padding-left: 3px;
  font-size: 7.500px;
  color: #c4c4c4;
}
.lfoot-ic { display: flex; margin-left: 13px; gap: 4.500px; color: #bdbdbd; }
.f-ic { width: 11px; height: 11px; }
.c1 { margin-left: 0; }
.c2 { padding: 0 5px 0 4px; }
.colorp { height: 142px; flex: none; margin-bottom: 1px; }
.cbody { display: flex; height: 63px; flex: none; position: relative; margin-top: 4px; }
.cswatch { position: relative; width: 34px; flex: none; }
.dsm { left: 4px; top: 4px; }
.swap2 { position: absolute; left: 15px; top: 4px; width: 9px; height: 9px; }
.fill2 { position: absolute; left: 4px; top: 12px; width: 11px; height: 11px; background: #fff; }
.stroke2 { position: absolute; left: 10px; top: 19px; width: 11px; height: 11px; background: #000; outline: 1px solid #aaa; }
.stroke2 i { margin: 2px; width: 5px; height: 5px; border: 1px solid #888; }
.sliders { flex: 1; display: flex; flex-direction: column; gap: 3px; padding-top: 1px; }
.slider {
  height: 12.500px;
  display: flex;
  align-items: center;
  flex: none;
  position: relative;
}
.slider label { width: 11px; font: 8px "Liberation Sans", sans-serif; color: #aaa; margin-right: 0; }
.track { position: relative; width: 61px; height: 3px; margin-left: 0; flex: none; }
.knob {
  position: absolute;
  left: -1px;
  top: 3px;
  width: 0;
  height: 0;
  border-bottom: 6px solid #ccc;
  border-left: 3px solid transparent;
  border-right: 3px solid transparent;
}
.val {
  width: 21px;
  height: 12px;
  margin-left: 5px;
  background: #484848;
  font: 7.500px/12px "Liberation Sans", sans-serif;
  padding-left: 3px;
  box-sizing: border-box;
  flex: none;
}
.pct { margin-left: 4px; font: 7px "Liberation Sans", sans-serif; color: #aaa; }
.quick { display: flex; margin: 3px 0 0 3px; gap: 1px; flex: none; }
.quick i { width: 7.500px; height: 8px; }
.q-none { background: linear-gradient(135deg, #fff 42%, #d02030 42%, #d02030 58%, #fff 58%); }
.q-black { background: #000; }
.q-white { background: #fff; }
.spectrum {
  margin: 7px 0 0 4px;
  width: 132px;
  height: 35px;
  flex: none;
  background:
    linear-gradient(to bottom, #fff 0%, rgba(255,255,255,0.55) 15%, rgba(255,255,255,0) 45%, rgba(0,0,0,0) 55%, rgba(0,0,0,0.6) 82%, #000 100%),
    linear-gradient(to right, #f03020 0%, #f08018 9%, #f2e820 16%, #5ec828 32%, #10b070 42%, #10b0d0 50%, #1a70c8 60%, #2a3aa8 68%, #8a3aa8 78%, #e01a90 90%, #f01040 100%);
}
.brushes { flex: 1; min-height: 0; }
.b1 { margin-left: 0; }
.b2 { padding: 0 6px; margin-left: 2px; }
.bbody { display: flex; padding: 4px 0 0 4px; flex: 1; min-height: 0; }
.blist { width: 131px; flex: none; overflow: hidden; }
.bgrid {
  display: grid;
  grid-template-columns: repeat(6, 19.500px);
  column-gap: 1px;
  row-gap: 1px;
  grid-auto-rows: 19.500px;
}
.bcell {
  background: #e6e6e6;
  display: flex;
  align-items: center;
  justify-content: center;
}
.bcell i { background: #000; border-radius: 50%; }
.brow {
  height: 19px;
  background: #e6e6e6;
  margin-top: 1px;
  display: flex;
  align-items: center;
  color: #333;
  overflow: hidden;
}
.basic i { width: 109px; height: 2px; background: #000; margin-left: 3px; }
.basic span { margin-left: 4px; font-size: 7px; }
.size .spk { margin-left: 5px; width: 10px; height: 12px; }
.size span { margin-left: 4px; font: 7px "Liberation Sans", sans-serif; width: 20px; }
.size svg { margin-left: 5px; }
.ink svg { margin-left: 2px; }
.arrow { height: 17px; }
.bscroll {
  width: 7px;
  margin-left: 2px;
  background: #4a4a4a;
  display: flex;
  flex-direction: column;
  justify-content: space-between;
  align-items: center;
  color: #aaa;
  height: 119px;
  position: relative;
}
.bscroll i { position: absolute; left: 1px; top: 10px; width: 5px; height: 95px; background: #5f5f5f; border-radius: 3px; }
.bscroll .sc-ic { width: 7px; height: 7px; }
.bfoot {
  height: 13px;
  flex: none;
  display: flex;
  align-items: center;
  padding-left: 4px;
  color: #bdbdbd;
}
.bf { width: 10px; height: 10px; }
.lib { margin-left: 6px; }
.bfoot-r { margin-left: 43px; display: flex; gap: 6px; }

/* 도크 */
.dock {
  width: 22px;
  flex: none;
  background: #535353;
  display: flex;
  flex-direction: column;
  align-items: center;
  color: #c0c0c0;
  padding-top: 6.500px;
  box-sizing: border-box;
}
.dock-group {
  width: 100%;
  display: flex;
  flex-direction: column;
  align-items: center;
  gap: 5.500px;
  padding-bottom: 4px;
  border-bottom: 1px solid #454545;
}
.dock-group:nth-child(2) { padding-bottom: 5.500px; }
.dock-group:nth-child(3) { padding-bottom: 5px; }
.dock-group:nth-child(5) { gap: 9px; }
.dock-group:last-child { border-bottom: 0; }
.dock-grip { width: 11px; height: 1px; background: #666; margin-top: 2px; }
.d-ic { width: 12px; height: 12px; }
.d-a { font: 14px/11px "Liberation Sans", sans-serif; color: #d8d8d8; display: flex; }
.d-a b { width: 1px; height: 12px; background: #ccc; margin-left: 1px; }
.d-o { font: italic 700 14px/10px "Liberation Serif", serif; color: #c4c4c4; }
</style>
